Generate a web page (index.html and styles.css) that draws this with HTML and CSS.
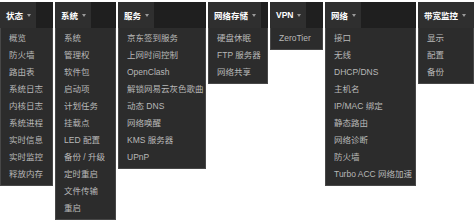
FILE: index.html
```html
<!DOCTYPE html>
<html lang="zh">
  <head>
    <meta charset="UTF-8" />
    <title>Menus</title>
    <link rel="stylesheet" href="styles.css">
  </head>
  <body>
    <div class="menus">
      <div class="menu m-status">
        <div class="bar"><span class="tab">状态<i class="caret"></i></span></div>
        <ul class="drop">
          <li>概览</li>
          <li>防火墙</li>
          <li>路由表</li>
          <li>系统日志</li>
          <li>内核日志</li>
          <li>系统进程</li>
          <li>实时信息</li>
          <li>实时监控</li>
          <li>释放内存</li>
        </ul>
      </div>

      <div class="menu m-system">
        <div class="bar"><span class="tab">系统<i class="caret"></i></span></div>
        <ul class="drop">
          <li>系统</li>
          <li>管理权</li>
          <li>软件包</li>
          <li>启动项</li>
          <li>计划任务</li>
          <li>挂载点</li>
          <li>LED 配置</li>
          <li>备份 / 升级</li>
          <li>定时重启</li>
          <li>文件传输</li>
          <li>重启</li>
        </ul>
      </div>

      <div class="menu m-services">
        <div class="bar"><span class="tab">服务<i class="caret"></i></span></div>
        <ul class="drop">
          <li>京东签到服务</li>
          <li>上网时间控制</li>
          <li>OpenClash</li>
          <li>解锁网易云灰色歌曲</li>
          <li>动态 DNS</li>
          <li>网络唤醒</li>
          <li>KMS 服务器</li>
          <li>UPnP</li>
        </ul>
      </div>

      <div class="menu m-nas">
        <div class="bar"><span class="tab">网络存储<i class="caret"></i></span></div>
        <ul class="drop">
          <li>硬盘休眠</li>
          <li>FTP 服务器</li>
          <li>网络共享</li>
        </ul>
      </div>

      <div class="menu m-vpn">
        <div class="bar"><span class="tab">VPN<i class="caret"></i></span></div>
        <ul class="drop">
          <li>ZeroTier</li>
        </ul>
      </div>

      <div class="menu m-network">
        <div class="bar"><span class="tab">网络<i class="caret"></i></span></div>
        <ul class="drop">
          <li>接口</li>
          <li>无线</li>
          <li>DHCP/DNS</li>
          <li>主机名</li>
          <li>IP/MAC 绑定</li>
          <li>静态路由</li>
          <li>网络诊断</li>
          <li>防火墙</li>
          <li>Turbo ACC 网络加速</li>
        </ul>
      </div>

      <div class="menu m-qos">
        <div class="bar"><span class="tab">带宽监控<i class="caret"></i></span></div>
        <ul class="drop">
          <li>显示</li>
          <li>配置</li>
          <li>备份</li>
        </ul>
      </div>
    </div>
  </body>
</html>
```

FILE: styles.css
```css
body {
  margin: 0;
  padding: 0;
  background-color: #fff;
  font-family: "Liberation Sans", "Noto Sans CJK SC", sans-serif;
  font-size: 8.5px;
}
.menus {
  display: flex;
  align-items: flex-start;
  gap: 2px;
  padding-top: 2px;
}
.menu {
  flex: none;
}
.bar {
  height: 26px;
  background-color: #1f1f1f;
  display: flex;
}
.tab {
  display: flex;
  align-items: center;
  padding: 0 5px 0 6px;
  background-color: #2f2f2f;
  color: #fff;
  font-weight: bold;
}
.caret {
  display: inline-block;
  margin-left: 4px;
  margin-top: 1px;
  border-top: 3px solid #9a9a9a;
  border-left: 2.5px solid transparent;
  border-right: 2.5px solid transparent;
}
.drop {
  list-style: none;
  margin: 0;
  padding: 2px 0;
  background-color: #2c2c2c;
  border: 1px solid #474747;
  border-top: none;
  box-sizing: border-box;
}
.drop li {
  height: 17px;
  line-height: 17px;
  padding-left: 8px;
  color: #b8b8b8;
  white-space: nowrap;
}
.m-status { width: 53px; }
.m-system { width: 61px; }
.m-services { width: 88px; }
.m-nas { width: 60px; }
.m-vpn { width: 53px; }
.m-network { width: 91px; }
.m-qos { width: 56px; }
.m-qos .tab { flex: 1; }
```
